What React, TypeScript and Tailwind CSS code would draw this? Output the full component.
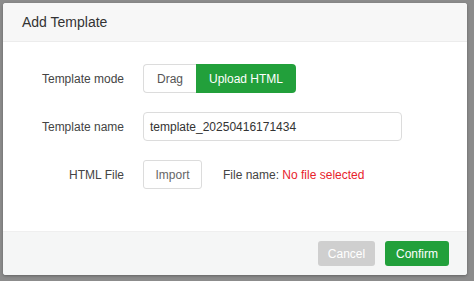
import React from 'react';

const labelCls = 'w-[140px] shrink-0 pr-[19px] text-right text-[12px] text-[#444]';

export default function App() {
  return (
    <div
      className="w-[474px] h-[281px] bg-[#8c8c8c] pt-[3px] pl-[3px] overflow-hidden"
      style={{ fontFamily: '"Liberation Sans", Arial, sans-serif' }}
    >
      <div className="w-[464px] h-[272px] bg-white rounded-[3px] flex flex-col overflow-hidden shadow-[0_1px_3px_rgba(0,0,0,0.3)]">
        {/* header */}
        <div className="h-[39px] shrink-0 bg-[#f7f7f7] border-b border-[#ececec] flex items-center pl-[19px]">
          <span className="text-[14px] text-[#333]">Add Template</span>
        </div>

        {/* body */}
        <div className="flex-1 flex flex-col gap-[19px] pt-[22px]">
          <div className="flex items-center h-[29px]">
            <div className={labelCls}>Template mode</div>
            <div className="flex h-[29px]">
              <button className="w-[53px] h-full border border-[#dcdcdc] border-r-0 rounded-l-[4px] bg-white text-[12px] text-[#555]">
                Drag
              </button>
              <button className="w-[100px] h-full rounded-r-[4px] bg-[#22a03b] text-[12px] text-white">
                Upload HTML
              </button>
            </div>
          </div>

          <div className="flex items-center h-[29px]">
            <div className={labelCls}>Template name</div>
            <div className="w-[259px] h-[29px] border border-[#dcdcdc] rounded-[4px] flex items-center px-[6px] text-[12px] text-[#333]">
              template_20250416171434
            </div>
          </div>

          <div className="flex items-center h-[29px]">
            <div className={labelCls}>HTML File</div>
            <button className="w-[59px] h-[29px] border border-[#dcdcdc] rounded-[3px] bg-white text-[12px] text-[#666]">
              Import
            </button>
            <div className="ml-[21px] text-[12px] text-[#444]">
              File name: <span className="text-[#e8222c]">No file selected</span>
            </div>
          </div>
        </div>

        {/* footer */}
        <div className="h-[44px] shrink-0 bg-[#f5f6f6] border-t border-[#efefef] flex items-center justify-end gap-[10px] pr-[18px]">
          <button className="w-[57px] h-[25px] rounded-[3px] bg-[#cfcfcf] text-[12px] text-white">
            Cancel
          </button>
          <button className="w-[64px] h-[25px] rounded-[3px] bg-[#22a03b] text-[12px] text-white">
            Confirm
          </button>
        </div>
      </div>
    </div>
  );
}
